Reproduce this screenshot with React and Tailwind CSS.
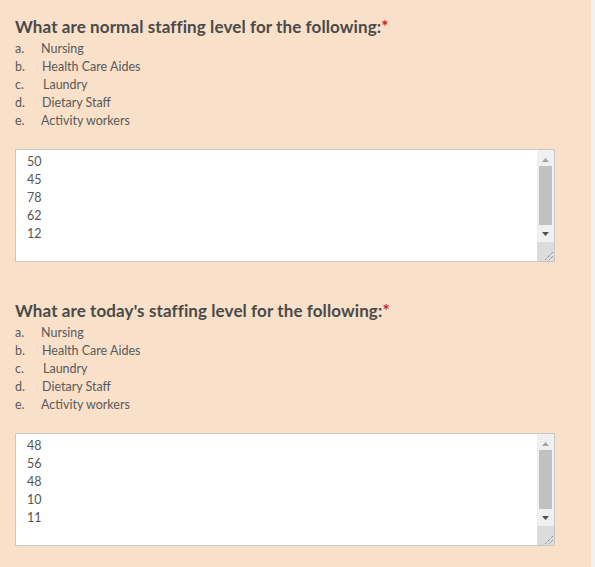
import React from "react";

const ROLES = [
  { k: "a.", t: "Nursing", pad: "pl-0" },
  { k: "b.", t: "Health Care Aides", pad: "pl-[1px]" },
  { k: "c.", t: "Laundry", pad: "pl-[2px]" },
  { k: "d.", t: "Dietary Staff", pad: "pl-[1px]" },
  { k: "e.", t: "Activity workers", pad: "pl-0" },
];

const QUESTIONS = [
  { title: "What are normal staffing level for the following:", values: ["50", "45", "78", "62", "12"] },
  { title: "What are today's staffing level for the following:", values: ["48", "56", "48", "10", "11"] },
];

// fake textarea with the classic windows scrollbar on the right
function FakeTextarea({ values }) {
  return (
    <div className="flex h-[113px] w-[540px] border border-[#c8c8c8] bg-white">
      <div className="flex-1 pl-[11px] pt-[3px] text-[12.5px] leading-[18px] text-[#555]">
        {values.map((v, i) => (
          <div key={i}>{v}</div>
        ))}
      </div>
      <div className="flex w-[17px] flex-col bg-[#f0f0f0]">
        <div className="flex h-[16px] items-center justify-center pt-[3px]">
          <svg width="7" height="4" viewBox="0 0 7 4">
            <path d="M3.5 0 L7 4 L0 4 Z" fill="#a3a3a3" />
          </svg>
        </div>
        <div className="mx-[2px] h-[59px] bg-[#c1c1c1]" />
        <div className="flex h-[17px] items-center justify-center">
          <svg width="7" height="4" viewBox="0 0 7 4">
            <path d="M0 0 L7 0 L3.5 4 Z" fill="#505050" />
          </svg>
        </div>
        <div className="flex flex-1 items-end justify-end bg-[#dcdcdc] p-[1px]">
          <svg width="9" height="9" viewBox="0 0 9 9">
            <path d="M9 1 L1 9 M9 5 L5 9" stroke="#707070" strokeWidth="1" strokeDasharray="1 1" />
          </svg>
        </div>
      </div>
    </div>
  );
}

export default function App() {
  return (
    <div className="flex h-[567px] w-[595px] bg-[#f0f0f0]" style={{ fontFamily: "Lato, 'Open Sans', sans-serif" }}>
      <div className="flex w-[591px] flex-col bg-[#f8e0c9] pl-[15px] pt-[16px]">
        {QUESTIONS.map((q, qi) => (
          <div key={qi} className={qi > 0 ? "mt-[38px]" : ""}>
            <h2 className="text-[17px] font-bold leading-[22px] tracking-[0.1px] text-[#4a4a4a]">
              {q.title}
              <span className="text-[#cc1f1f]">*</span>
            </h2>
            <ul className="mt-[2px] text-[12.5px] leading-[18px] text-[#5a5a5a]">
              {ROLES.map((r) => (
                <li key={r.k} className="flex">
                  <span className="w-[26px]">{r.k}</span>
                  <span className={r.pad}>{r.t}</span>
                </li>
              ))}
            </ul>
            <div className="mt-[19px]">
              <FakeTextarea values={q.values} />
            </div>
          </div>
        ))}
      </div>
      <div className="flex-1" />
    </div>
  );
}
